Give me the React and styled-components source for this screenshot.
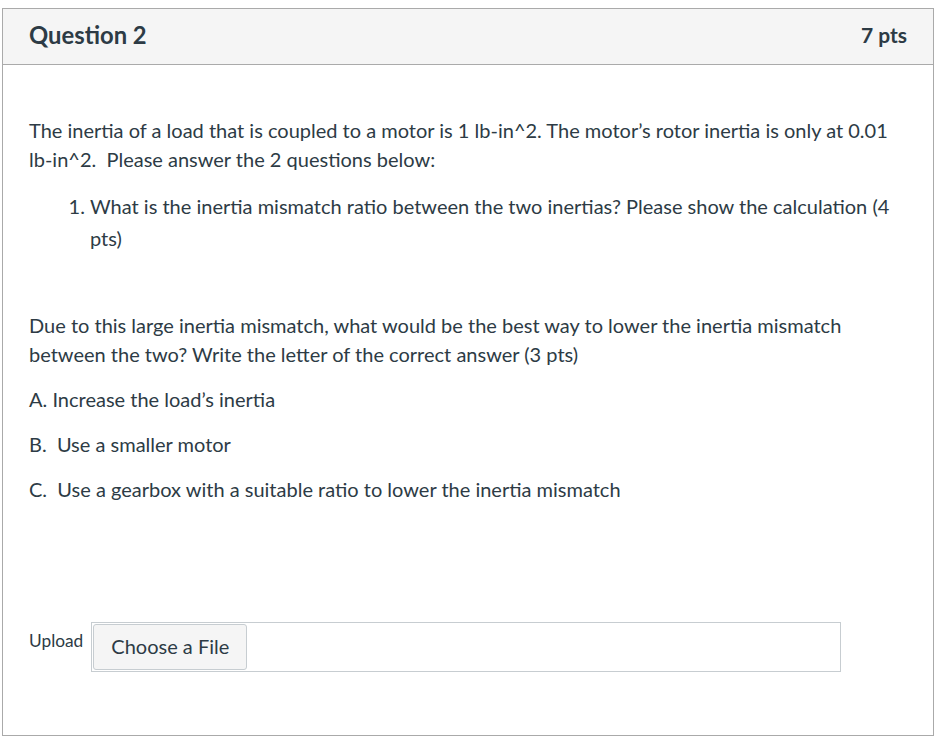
import React from "react";
import styled, { createGlobalStyle } from "styled-components";

const GlobalStyle = createGlobalStyle`
  html, body {
    margin: 0;
    padding: 0;
    background: #ffffff;
  }
  body {
    font-family: Lato, "Open Sans", "Liberation Sans", sans-serif;
    color: #2d3b45;
  }
`;

const Page = styled.div`
  padding: 8px 7px 12px 2px;
`;

const Card = styled.div`
  width: 930px;
  height: 726px;
  border: 1px solid #aaaaaa;
  display: flex;
  flex-direction: column;
`;

const Header = styled.div`
  height: 56px;
  flex: none;
  box-sizing: border-box;
  background: #f5f5f5;
  border-bottom: 1px solid #aaaaaa;
  display: flex;
  align-items: center;
  justify-content: space-between;
  padding: 0 26px 4px 26px;
`;

const Title = styled.h2`
  margin: 0;
  font-size: 23.8px;
  font-weight: 700;
  color: #2d3b45;
`;

const Points = styled.span`
  font-size: 21px;
  font-weight: 700;
  color: #2d3b45;
`;

const Body = styled.div`
  padding: 35px 26px 0 26px;
  font-size: 20px;
  line-height: 29px;
`;

const Paragraph = styled.p`
  margin: 16px 0;
`;

const List = styled.ol`
  margin: 16px 0 57px 0;
  padding-left: 61px;
`;

const Item = styled.li`
  line-height: 32px;
`;

const UploadRow = styled.div`
  display: flex;
  align-items: flex-start;
  gap: 8px;
  margin-top: 118px;
`;

const UploadLabel = styled.label`
  font-size: 17.3px;
  line-height: 20px;
  padding-top: 9px;
  color: #2d3b45;
`;

const FileBox = styled.div`
  width: 747px;
  height: 48px;
  border: 1px solid #c7cdd1;
  display: flex;
  align-items: center;
  padding-left: 1px;
`;

const FileButton = styled.button`
  height: 46px;
  width: 154px;
  background: #f5f5f5;
  border: 1px solid #c7cdd1;
  border-radius: 3px;
  font-family: Lato, "Open Sans", "Liberation Sans", sans-serif;
  font-size: 20px;
  color: #2d3b45;
  padding: 0 0 3px 0;
  cursor: pointer;
`;

const App = () => {
  return (
    <>
      <GlobalStyle />
      <Page>
        <Card>
          <Header>
            <Title>Question 2</Title>
            <Points>7 pts</Points>
          </Header>
          <Body>
            <Paragraph>
              The inertia of a load that is coupled to a motor is 1 lb-in^2. The motor’s rotor inertia is only at 0.01
              lb-in^2.&nbsp; Please answer the 2 questions below:
            </Paragraph>
            <List>
              <Item>
                What is the inertia mismatch ratio between the two inertias? Please show the calculation (4 pts)
              </Item>
            </List>
            <Paragraph>
              Due to this large inertia mismatch, what would be the best way to lower the inertia mismatch
              between the two? Write the letter of the correct answer (3 pts)
            </Paragraph>
            <Paragraph>A. Increase the load’s inertia</Paragraph>
            <Paragraph>B.&nbsp; Use a smaller motor</Paragraph>
            <Paragraph>C.&nbsp; Use a gearbox with a suitable ratio to lower the inertia mismatch</Paragraph>
            <UploadRow>
              <UploadLabel>Upload</UploadLabel>
              <FileBox>
                <FileButton type="button">Choose a File</FileButton>
              </FileBox>
            </UploadRow>
          </Body>
        </Card>
      </Page>
    </>
  );
};

export default App;
